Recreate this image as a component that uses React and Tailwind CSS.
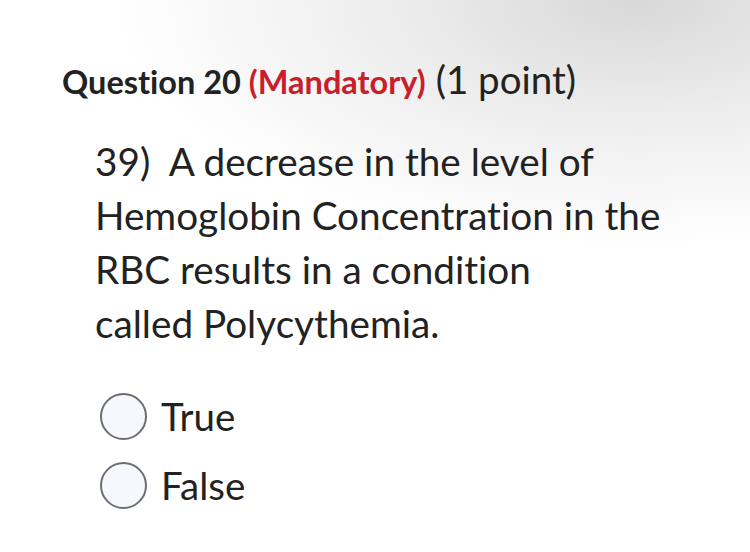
export default function App() {
  const options = ['True', 'False'];
  return (
    <div className="h-[552px] w-[750px] overflow-hidden bg-[radial-gradient(ellipse_70%_45%_at_85%_0%,#d8d8d8_0%,#ececec_45%,#ffffff_100%)] font-['Lato',sans-serif] text-[#222] [font-variant-ligatures:none]">
      <div className="pl-[62px] pt-[56px]">
        <h2 className="whitespace-nowrap text-[32.5px] leading-[46px]">
          <span className="font-bold">Question 20 </span>
          <span className="font-bold text-[#c8202a]">(Mandatory)</span>
          <span className="text-[38.5px]"> (1 point)</span>
        </h2>
      </div>

      <p className="mt-[29px] pl-[95px] text-[38.7px] leading-[54px]">
        39)&nbsp; A decrease in the level of
        <br />
        Hemoglobin Concentration in the
        <br />
        RBC results in a condition
        <br />
        called Polycythemia.
      </p>

      <div className="mt-[43px] flex flex-col gap-[22px] pl-[100px]">
        {options.map((opt) => (
          <label key={opt} className="flex items-center gap-[14px]">
            <span className="h-[47px] w-[47px] shrink-0 rounded-full border-2 border-[#6b6f73] bg-[#f7f8fd]" />
            <span className="text-[38.5px] leading-[47px]">{opt}</span>
          </label>
        ))}
      </div>
    </div>
  );
}
